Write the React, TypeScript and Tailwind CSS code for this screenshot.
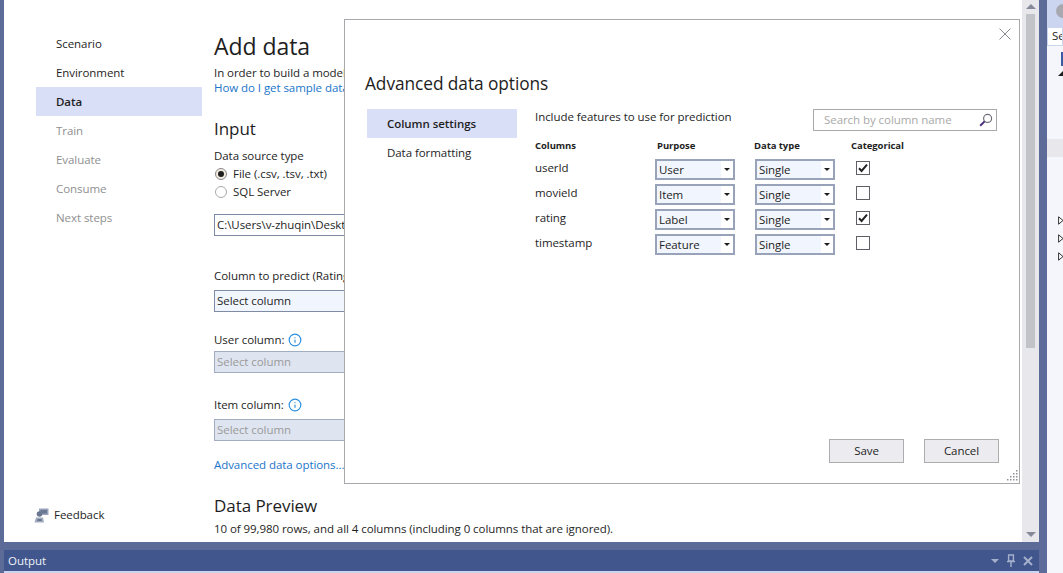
import React from "react";
import { Info } from "lucide-react";

const navItems = [
  { label: "Scenario", tone: "text-[#1e1e1e]" },
  { label: "Environment", tone: "text-[#1e1e1e]" },
  { label: "Data", tone: "text-[#1e1e1e] font-semibold bg-[#d9dff7]" },
  { label: "Train", tone: "text-[#8f8f8f]" },
  { label: "Evaluate", tone: "text-[#8f8f8f]" },
  { label: "Consume", tone: "text-[#8f8f8f]" },
  { label: "Next steps", tone: "text-[#8f8f8f]" },
];

const columns = [
  { name: "userId", purpose: "User", checked: true },
  { name: "movieId", purpose: "Item", checked: false },
  { name: "rating", purpose: "Label", checked: true },
  { name: "timestamp", purpose: "Feature", checked: false },
];

function CaretDown() {
  return <span className="w-0 h-0 border-x-[3.5px] border-x-transparent border-t-[3px] border-t-[#1e1e1e]" />;
}

function MiniSelect({ value }: { value: string }) {
  return (
    <div className="w-20 h-[21px] border-2 border-[#98a2b8] flex bg-white">
      <div className="w-[64px] bg-[#f1f5fd] pl-[2px] leading-[17px] text-[#1e1e1e]">{value}</div>
      <div className="flex-1 flex items-center justify-center">
        <CaretDown />
      </div>
    </div>
  );
}

function Checkbox({ checked }: { checked: boolean }) {
  return (
    <div className="w-[14px] h-[14px] border border-[#5f5f66] bg-white flex items-center justify-center">
      {checked && (
        <svg width="12" height="12" viewBox="0 0 12 12">
          <path d="M2 6.2 L4.6 9 L10 2.6" fill="none" stroke="#222" strokeWidth="2" />
        </svg>
      )}
    </div>
  );
}

function FieldSelect({ disabled }: { disabled?: boolean }) {
  return (
    <div
      className={
        disabled
          ? "w-[500px] h-[22px] border border-[#a3adc2] bg-[#dfe5f0] text-[#9a9a9a] pl-[2px] leading-5"
          : "w-[500px] h-[22px] border border-[#7f8aa5] bg-[#f1f5fd] text-[#1e1e1e] pl-[2px] leading-5"
      }
    >
      Select column
    </div>
  );
}

function FeedbackIcon() {
  return (
    <svg width="15" height="15" viewBox="0 0 15 15">
      <rect x="5" y="0.5" width="9.5" height="6.5" fill="#98a3bb" />
      <rect x="6.5" y="2" width="6.5" height="3.5" fill="#6b7791" />
      <circle cx="5.5" cy="6" r="2.8" fill="#6b7791" />
      <path d="M0.5 14.5 L2 9.5 H9 L10 14.5 Z" fill="#a2acc0" />
      <path d="M3.5 11 H7.5 L8 13 H3 Z" fill="#6b7791" />
    </svg>
  );
}

function SearchIcon() {
  return (
    <svg width="14" height="14" viewBox="0 0 14 14">
      <circle cx="8.6" cy="5.4" r="4" fill="none" stroke="#6d6d78" strokeWidth="1.2" />
      <path d="M5.6 8.4 L1.2 12.8" stroke="#4b2f78" strokeWidth="2" />
    </svg>
  );
}

function TreeArrow() {
  return (
    <svg width="6" height="9" viewBox="0 0 6 9">
      <path d="M0.6 0.8 L5 4.5 L0.6 8.2 Z" fill="white" stroke="#333" strokeWidth="1" />
    </svg>
  );
}

function OutputIcons() {
  return (
    <div className="flex items-center gap-2 pr-[6px]">
      <span className="w-0 h-0 border-x-[4px] border-x-transparent border-t-[4px] border-t-[#a5b0cc]" />
      <svg width="8" height="13" viewBox="0 0 8 13">
        <path d="M1.6 1 H6.4 V7 H1.6 Z M0 7.5 H8 M4 8 V13" fill="none" stroke="#a5b0cc" strokeWidth="1.4" />
      </svg>
      <svg width="10" height="10" viewBox="0 0 10 10">
        <path d="M1 1 L9 9 M9 1 L1 9" stroke="#a5b0cc" strokeWidth="2" />
      </svg>
    </div>
  );
}

function AdvancedDialog() {
  return (
    <div className="absolute left-[340px] top-[19px] w-[676px] h-[465px] border border-[#a9a9ad] bg-white flex flex-col">
      <div className="h-[46px] flex justify-end pt-[8px] pr-[8px]">
        <svg width="12" height="12" viewBox="0 0 12 12">
          <path d="M0.5 0.5 L11.5 11.5 M11.5 0.5 L0.5 11.5" stroke="#8a8a8e" strokeWidth="1" />
        </svg>
      </div>
      <h2 className="ml-5 text-[17.3px] leading-[36px] text-[#1e1e1e]">Advanced data options</h2>
      <div className="flex mt-[7px] flex-1">
        <div className="w-[150px] ml-[22px]">
          <div className="h-[29px] pl-5 bg-[#d9dff7] font-semibold leading-[30px]">Column settings</div>
          <div className="h-[29px] pl-5 leading-[30px]">Data formatting</div>
        </div>
        <div className="ml-[18px] flex-1 flex flex-col">
          <div className="flex justify-between items-start h-[22px] mr-[22px]">
            <span className="leading-[16px]">Include features to use for prediction</span>
            <div className="w-[184px] h-[22px] border border-[#a9a9ad] flex items-center justify-between pl-[10px] pr-[3px] text-[#a9a9a9]">
              <span>Search by column name</span>
              <SearchIcon />
            </div>
          </div>
          <div className="grid grid-cols-[120px_100px_100px_1fr] mt-[7px] text-[9.5px] font-bold leading-[16px] text-[#1e1e1e]">
            <span>Columns</span>
            <span className="pl-[2px]">Purpose</span>
            <span className="-ml-px">Data type</span>
            <span className="-ml-1">Categorical</span>
          </div>
          <div className="mt-[5px] flex flex-col gap-1">
            {columns.map((c) => (
              <div key={c.name} className="grid grid-cols-[120px_100px_100px_1fr] items-center h-[21px]">
                <span className="leading-[16px] -mt-[3px]">{c.name}</span>
                <MiniSelect value={c.purpose} />
                <MiniSelect value="Single" />
                <div className="pl-px -mt-1">
                  <Checkbox checked={c.checked} />
                </div>
              </div>
            ))}
          </div>
          <div className="mt-auto mb-5 mr-[20px] flex justify-end gap-5">
            <button className="w-[75px] h-6 bg-[#ececf0] border border-[#adadad] text-[#1e1e1e]">Save</button>
            <button className="w-[75px] h-6 bg-[#ececf0] border border-[#adadad] text-[#1e1e1e]">Cancel</button>
          </div>
        </div>
      </div>
      <svg className="absolute right-[1px] bottom-[1px]" width="12" height="12" viewBox="0 0 12 12" fill="#8f8f96">
        <rect x="10" y="0" width="1.5" height="1.5" />
        <rect x="7" y="3" width="1.5" height="1.5" />
        <rect x="10" y="3" width="1.5" height="1.5" />
        <rect x="4" y="6" width="1.5" height="1.5" />
        <rect x="7" y="6" width="1.5" height="1.5" />
        <rect x="10" y="6" width="1.5" height="1.5" />
        <rect x="1" y="9" width="1.5" height="1.5" />
        <rect x="4" y="9" width="1.5" height="1.5" />
        <rect x="7" y="9" width="1.5" height="1.5" />
        <rect x="10" y="9" width="1.5" height="1.5" />
      </svg>
    </div>
  );
}

export default function App() {
  return (
    <div className="w-[1063px] h-[573px] flex overflow-hidden bg-[#5d6b99] text-[11.5px] tracking-[-0.06px] text-[#1e1e1e] font-['Open_Sans','Noto_Sans',sans-serif]">
      <div className="w-[1047px] pl-1 pr-2 flex flex-col">
        <div className="h-[542px] flex">
          <main className="relative w-[1018px] bg-white flex overflow-hidden">
            <aside className="w-[166px] ml-8 mr-3 flex flex-col pt-[29px] pb-[19px]">
              {navItems.map((n) => (
                <div key={n.label} className={"h-[29px] pl-5 leading-[29px] " + n.tone}>
                  {n.label}
                </div>
              ))}
              <div className="mt-auto flex items-center gap-[5px] -ml-[2px] h-4">
                <FeedbackIcon />
                <span>Feedback</span>
              </div>
            </aside>
            <section className="flex-1 whitespace-nowrap">
              <h1 className="mt-7 text-[23px] leading-9 text-[#1e1e1e]">Add data</h1>
              <p className="w-[130px] overflow-hidden leading-[15px] mt-px">In order to build a model, you must first add data.</p>
              <a className="block w-[130px] overflow-hidden leading-[15px] text-[#1b75c9]">How do I get sample data?</a>
              <h2 className="mt-5 text-[17px] leading-[27px]">Input</h2>
              <div className="mt-[6px] leading-[16px]">Data source type</div>
              <div className="mt-px flex items-center gap-[6px] h-[18px] pl-px">
                <span className="w-3 h-3 rounded-full border border-[#8a8a8e] bg-[#f1eadf] flex items-center justify-center">
                  <span className="w-[6px] h-[6px] rounded-full bg-[#1e1e1e]" />
                </span>
                File (.csv, .tsv, .txt)
              </div>
              <div className="flex items-center gap-[6px] h-[18px] pl-px">
                <span className="w-3 h-3 rounded-full border border-[#a9a9ad] bg-white" />
                SQL Server
              </div>
              <div className="mt-[13px] w-[500px] h-[22px] border border-[#7f8aa5] pl-[2px] leading-5">
                C:\Users\v-zhuqin\Desktop\ratings.csv
              </div>
              <div className="mt-8 leading-[16px]">Column to predict (Rating):</div>
              <div className="mt-[6px]">
                <FieldSelect />
              </div>
              <div className="mt-5 flex items-center gap-1 h-4">
                User column:
                <Info size={14} className="text-[#2a8fe0]" />
              </div>
              <div className="mt-[3px]">
                <FieldSelect disabled />
              </div>
              <div className="mt-6 flex items-center gap-1 h-4">
                Item column:
                <Info size={14} className="text-[#2a8fe0]" />
              </div>
              <div className="mt-[6px]">
                <FieldSelect disabled />
              </div>
              <a className="block mt-4 leading-4 text-[#1b75c9]">Advanced data options...</a>
              <h2 className="mt-[19px] text-[17px] leading-[27px]">Data Preview</h2>
              <p className="mt-[2px] leading-4">10 of 99,980 rows, and all 4 columns (including 0 columns that are ignored).</p>
            </section>
            <AdvancedDialog />
          </main>
          <div className="w-[17px] bg-[#e8e8ec] flex flex-col items-center">
            <span className="mt-[4px] w-0 h-0 border-x-[5px] border-x-transparent border-b-[5px] border-b-[#868999]" />
            <div className="mt-[5px] w-[9px] h-[334px] bg-[#c2c3c9]" />
            <span className="mt-auto mb-[5px] w-0 h-0 border-x-[5px] border-x-transparent border-t-[5px] border-t-[#868999]" />
          </div>
        </div>
        <div className="mt-2 h-[21px] bg-[#40568d] flex items-center justify-between pl-[4px] text-[#f0f2f8]">
          <span>Output</span>
          <OutputIcons />
        </div>
        <div className="h-[2px] bg-[#ccd5f0]" />
      </div>
      <aside className="w-4 bg-[#f5f6fb] flex flex-col overflow-hidden">
        <div className="h-[27px] bg-[#ccd5f0] pt-[4px] pl-[9px]">
          <div className="w-[14px] h-[14px] rounded-full bg-[#a8a9b0]" />
        </div>
        <div className="h-[19px] bg-white border border-[#ccd5f0] pl-[4px] leading-[16px] whitespace-nowrap overflow-hidden">Search</div>
        <div className="mt-[6px] ml-[14px] w-[2px] h-[14px] bg-[#3c5aa8]" />
        <span className="mt-[5px] ml-[11px] w-0 h-0 border-l-[5px] border-l-transparent border-b-[5px] border-b-[#1e1e1e]" />
        <div className="mt-[63px] h-[18px] bg-[#e8e8ec]" />
        <div className="mt-[59px] ml-[11px] flex flex-col gap-[9px]">
          <TreeArrow />
          <TreeArrow />
          <TreeArrow />
        </div>
      </aside>
    </div>
  );
}
